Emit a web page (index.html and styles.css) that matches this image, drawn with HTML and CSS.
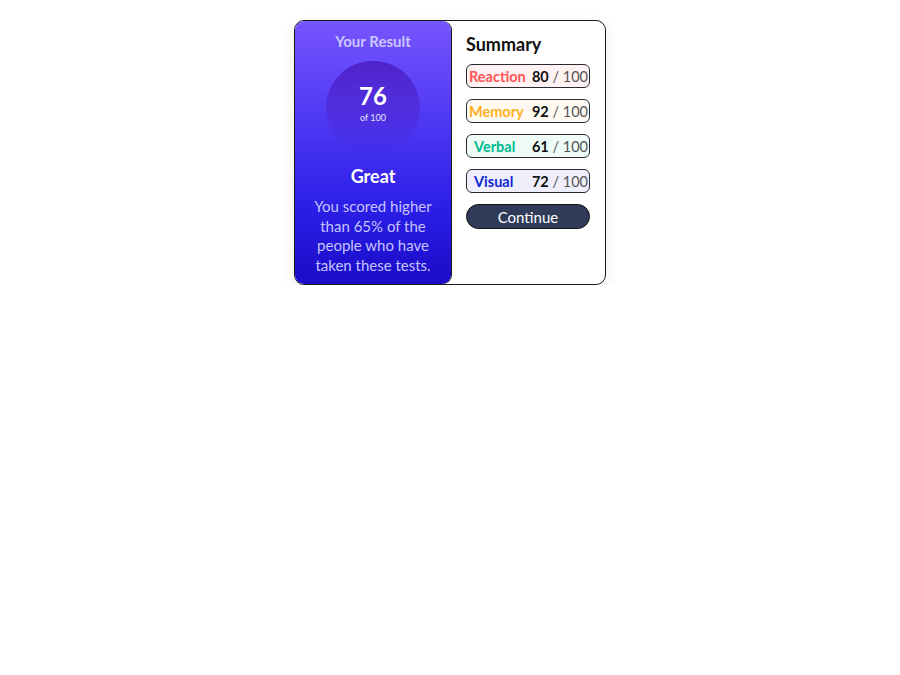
FILE: index.html
```html
<!DOCTYPE html>
<html lang="en">
<head>
<meta charset="utf-8">
<title>Results summary</title>
<link rel="stylesheet" href="styles.css">
</head>
<body>
<main class="card">
  <section class="result">
    <h2 class="result-title">Your Result</h2>
    <div class="circle">
      <span class="score">76</span>
      <span class="of">of 100</span>
    </div>
    <h3 class="grade">Great</h3>
    <p class="desc">You scored higher than 65% of the people who have taken these tests.</p>
  </section>
  <section class="summary">
    <h2 class="summary-title">Summary</h2>
    <ul class="items">
      <li class="item reaction"><span class="label">Reaction</span><span class="val"><b>80</b> / 100</span></li>
      <li class="item memory"><span class="label">Memory</span><span class="val"><b>92</b> / 100</span></li>
      <li class="item verbal"><span class="label">Verbal</span><span class="val"><b>61</b> / 100</span></li>
      <li class="item visual"><span class="label">Visual</span><span class="val"><b>72</b> / 100</span></li>
    </ul>
    <button class="btn">Continue</button>
  </section>
</main>
</body>
</html>
```
FILE: styles.css
```css
* { box-sizing: border-box; }
body {
  margin: 0;
  background: #fff;
  font-family: Lato, "Open Sans", "Liberation Sans", sans-serif;
}
.card {
  width: 312px;
  height: 265px;
  margin: 20px auto 0;
  display: flex;
  border: 1px solid #1a1a1a;
  border-radius: 10px;
  box-shadow: 0 4px 14px rgba(0,0,0,0.08);
  background: #fff;
}
.result {
  width: 156px;
  flex-shrink: 0;
  border-radius: 9px;
  background: linear-gradient(to bottom, #7755ff, #2b1fe8 70%, #1a0cc6);
  box-shadow: 1px 0 0 #1a1a1a;
  display: flex;
  flex-direction: column;
  align-items: center;
  padding-top: 10px;
  text-align: center;
}
.result-title {
  margin: 0;
  font-size: 15px;
  font-weight: 700;
  color: #cac7ff;
  line-height: 20px;
}
.circle {
  width: 94px;
  height: 94px;
  border-radius: 50%;
  margin-top: 10px;
  background: linear-gradient(to bottom, #4d21c9, rgba(37,33,201,0) 100%);
  display: flex;
  flex-direction: column;
  align-items: center;
  justify-content: center;
  color: #fff;
}
.score {
  font-size: 24px;
  font-weight: 700;
  line-height: 26px;
  margin-top: -10px;
}
.of {
  font-size: 9px;
  line-height: 12px;
  margin-top: 3px;
  color: #e6e4ff;
}
.grade {
  margin: 10px 0 0;
  font-size: 18px;
  font-weight: 700;
  color: #fff;
  line-height: 22px;
}
.desc {
  margin: 10px 0 0;
  width: 130px;
  font-size: 15px;
  line-height: 19.5px;
  color: #c6c3ff;
}
.summary {
  flex: 1;
  min-width: 0;
  padding: 12px 15px 0 15px;
}
.summary-title {
  margin: 0;
  font-size: 18px;
  font-weight: 700;
  color: #111;
  line-height: 22px;
}
.items {
  list-style: none;
  margin: 9px 0 0;
  padding: 0;
  display: flex;
  flex-direction: column;
  gap: 11px;
}
.item {
  height: 24px;
  border: 1.5px solid #2a2a33;
  border-radius: 6px;
  display: flex;
  align-items: center;
  justify-content: space-between;
  gap: 3px;
  padding: 0 1px 0 2px;
  font-size: 14.5px;
}
.label { font-weight: 700; white-space: nowrap; }
.val { color: #555; white-space: nowrap; }
.val b { color: #111; font-weight: 700; }
.reaction { background: #fff2f2; }
.reaction .label { color: #ff5757; }
.memory { background: #fffbf2; }
.memory .label { color: #ffb01f; }
.verbal { background: #eefbf7; }
.verbal .label { color: #00bb8f; padding-left: 5px; }
.visual { background: #eeeffb; }
.visual .label { color: #1125d6; padding-left: 5px; }
.btn {
  display: block;
  margin-top: 11px;
  width: 100%;
  height: 25px;
  border: 1.5px solid #111;
  border-radius: 13px;
  background: #303b5a;
  color: #fff;
  font-family: inherit;
  font-size: 15px;
  padding: 0;
}
```
